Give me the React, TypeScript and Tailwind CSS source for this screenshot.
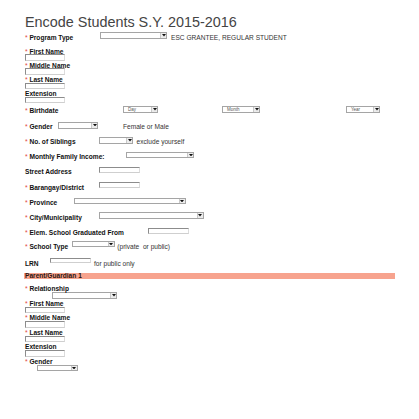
import React from "react";

const LBL = "text-[6.6px] leading-[6px] font-bold text-[#111] whitespace-nowrap";
const TXT = "text-[6.6px] leading-[6px] text-[#333] whitespace-nowrap";

function Label({ text, req = true }: { text: string; req?: boolean }) {
  return (
    <div className={LBL}>
      {req && <span className="text-[#e0443c] font-normal">* </span>}
      {text}
    </div>
  );
}

function Input({ className = "" }: { className?: string }) {
  return (
    <div
      className={`shrink-0 border border-t-[#8c8c8c] border-l-[#8c8c8c] border-r-[#dcdcdc] border-b-[#cfcfcf] bg-white ${className}`}
    />
  );
}

function Select({ className = "", text = "" }: { className?: string; text?: string }) {
  return (
    <div className={`shrink-0 flex border border-[#a5a5a5] bg-white ${className}`}>
      <div className="flex-1 pl-[4px] text-[4.5px] leading-[5px] text-[#555] flex items-center">{text}</div>
      <div className="w-[6px] border-l border-[#c8c8c8] bg-[#ececec] flex items-center justify-center">
        <svg width="4" height="2.5" viewBox="0 0 4 2.5">
          <path d="M0 0H4L2 2.5Z" fill="#111" />
        </svg>
      </div>
    </div>
  );
}

function NameGroup({ text, req = true }: { text: string; req?: boolean }) {
  return (
    <div className="mb-[2.3px]">
      <div className="h-[5.5px]">
        <Label text={text} req={req} />
      </div>
      <Input className="w-[40px] h-[6.5px]" />
    </div>
  );
}

function NameGroup2({ text, req = true }: { text: string; req?: boolean }) {
  return (
    <div className="mb-[2px]">
      <div className="h-[6px]">
        <Label text={text} req={req} />
      </div>
      <Input className="w-[40px] h-[6.5px]" />
    </div>
  );
}

export default function App() {
  return (
    <div className="w-[419px] h-[419px] bg-white overflow-hidden pl-[25px] pt-[12px] font-['Liberation_Sans',Arial,sans-serif]">
      <div className="h-[20px] text-[14.4px] leading-[20px] text-[#444] whitespace-nowrap">
        Encode Students S.Y. 2015-2016
      </div>

      {/* Program Type */}
      <div className="flex items-start h-[16.6px]">
        <div className="w-[75px] shrink-0 mt-[3.4px]">
          <Label text="Program Type" />
        </div>
        <Select className="w-[67px] h-[7px]" />
        <div className={`${TXT} ml-[4px] mt-[3.4px]`}>ESC GRANTEE, REGULAR STUDENT</div>
      </div>

      <NameGroup text="First Name" />
      <NameGroup text="Middle Name" />
      <NameGroup text="Last Name" />
      <div>
        <div className="h-[5.5px]">
          <Label text="Extension" req={false} />
        </div>
        <Input className="w-[40px] h-[6.5px]" />
      </div>

      {/* Birthdate */}
      <div className="flex items-start h-[15.7px] mt-[2.5px]">
        <div className="w-[98px] shrink-0 mt-[2.05px]">
          <Label text="Birthdate" />
        </div>
        <Select className="w-[35px] h-[7px]" text="Day" />
        <Select className="w-[38px] h-[7px] ml-[64px]" text="Month" />
        <Select className="w-[34px] h-[7px] ml-[86px]" text="Year" />
      </div>

      {/* Gender */}
      <div className="flex items-start h-[15.6px]">
        <div className="w-[33px] shrink-0 mt-[2.05px]">
          <Label text="Gender" />
        </div>
        <Select className="w-[40px] h-[7px]" />
        <div className={`${TXT} ml-[25px] mt-[2.05px]`}>Female or Male</div>
      </div>

      {/* Siblings */}
      <div className="flex items-start h-[14.4px]">
        <div className="w-[74.3px] shrink-0 mt-[2.05px]">
          <Label text="No. of Siblings" />
        </div>
        <Select className="w-[34px] h-[6.5px]" />
        <div className={`${TXT} ml-[3.3px] mt-[2.05px]`}>exclude yourself</div>
      </div>

      {/* Monthly */}
      <div className="flex items-start h-[15px]">
        <div className="w-[101px] shrink-0 mt-[2.05px]">
          <Label text="Monthly Family Income:" />
        </div>
        <Select className="w-[68px] h-[6.5px]" />
      </div>

      {/* Street */}
      <div className="flex items-start h-[15px]">
        <div className="w-[74.3px] shrink-0 mt-[2.65px]">
          <Label text="Street Address" req={false} />
        </div>
        <Input className="w-[40.7px] h-[6.6px]" />
      </div>

      {/* Barangay */}
      <div className="flex items-start h-[16px]">
        <div className="w-[74.3px] shrink-0 mt-[3.05px]">
          <Label text="Barangay/District" />
        </div>
        <Input className="w-[40.7px] h-[6.6px]" />
      </div>

      {/* Province */}
      <div className="flex items-start h-[14.6px]">
        <div className="w-[49px] shrink-0 mt-[2.05px]">
          <Label text="Province" />
        </div>
        <Select className="w-[111.7px] h-[6.5px]" />
      </div>

      {/* City */}
      <div className="flex items-start h-[15.4px]">
        <div className="w-[74.3px] shrink-0 mt-[3.05px]">
          <Label text="City/Municipality" />
        </div>
        <Select className="w-[104.7px] h-[6.7px]" />
      </div>

      {/* Elem */}
      <div className="flex items-start h-[13.3px]">
        <div className="w-[123.3px] shrink-0 mt-[2.65px]">
          <Label text="Elem. School Graduated From" />
        </div>
        <Input className="w-[41px] h-[6.6px]" />
      </div>

      {/* School Type */}
      <div className="flex items-start h-[16.7px]">
        <div className="w-[46.7px] shrink-0 mt-[3.35px]">
          <Label text="School Type" />
        </div>
        <Select className="w-[43.3px] h-[6.3px]" />
        <div className={`${TXT} ml-[2.3px] mt-[3.35px]`}>(private&nbsp; or public)</div>
      </div>

      {/* LRN */}
      <div className="flex items-start h-[15.3px]">
        <div className="w-[25px] shrink-0 mt-[3.65px]">
          <Label text="LRN" req={false} />
        </div>
        <Input className="w-[40.7px] h-[5.6px]" />
        <div className={`${TXT} ml-[3.3px] mt-[3.65px]`}>for public only</div>
      </div>

      {/* Bar */}
      <div className="h-[6px] w-[371px] -ml-[1px] pl-[1px] bg-[#f7a38e] text-[6.6px] leading-[6px] font-bold text-[#2a1510] whitespace-nowrap">
        Parent/Guardian 1
      </div>

      {/* Relationship */}
      <div className="mt-[7px] h-[6.3px]">
        <Label text="Relationship" />
      </div>
      <Select className="w-[65px] h-[6.7px] ml-[27px]" />

      <div className="mt-[2px]">
        <NameGroup2 text="First Name" />
        <NameGroup2 text="Middle Name" />
        <NameGroup2 text="Last Name" />
        <NameGroup2 text="Extension" req={false} />
        <div className="h-[6px]">
          <Label text="Gender" />
        </div>
        <Select className="w-[41px] h-[6.5px] ml-[11.5px]" />
      </div>
    </div>
  );
}
